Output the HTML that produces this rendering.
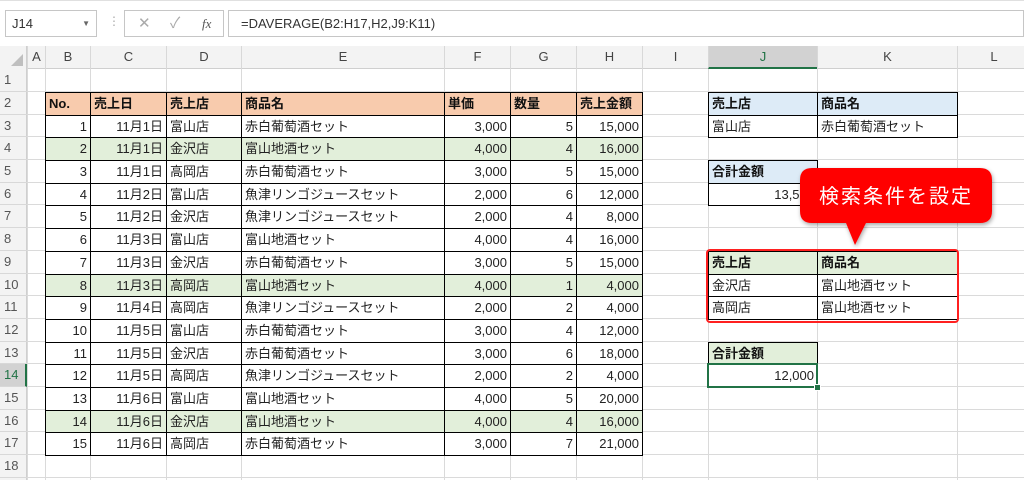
<!DOCTYPE html><html><head><meta charset="utf-8"><style>
html,body{margin:0;width:1024px;height:480px;overflow:hidden}
body{background:#fff;font-family:"Liberation Sans","Noto Sans CJK JP",sans-serif;position:relative;color:#222}
.c{position:absolute;box-sizing:border-box;font-size:13px;line-height:22px;white-space:nowrap;overflow:visible;padding:0 3px}
.tb{position:absolute;left:0;top:0;width:1024px;height:46px;background:#fff;border-top:1px solid #e0e0e0;box-sizing:border-box}
.box{position:absolute;border:1px solid #c6c6c6;background:#fff;box-sizing:border-box}
</style></head><body>
<div class="tb"></div>
<div class="box" style="left:5px;top:10px;width:92px;height:27px;font-size:13px;line-height:25px;padding-left:6px;color:#333">J14<span style="position:absolute;right:6px;top:0;font-size:8px;color:#666">▼</span></div>
<div style="position:absolute;left:108px;top:14px;color:#aaa;font-size:12px">⋮</div>
<div class="box" style="left:124px;top:10px;width:100px;height:27px;color:#aaa;font-size:15px;line-height:25px"><span style="position:absolute;left:13px">✕</span><span style="position:absolute;left:45px">✓</span><span style="position:absolute;left:77px;font-family:'Liberation Serif',serif;font-style:italic;color:#555;font-size:13px">fx</span></div>
<div class="box" style="left:228px;top:10px;width:796px;height:27px;font-size:13px;line-height:25px;padding-left:12px;color:#333">=DAVERAGE(B2:H17,H2,J9:K11)</div>
<div id="g" style="position:absolute;left:0;top:0;width:1024px;height:480px;overflow:hidden"></div>
<svg style="position:absolute;left:0;top:0" width="1024" height="480"><defs><filter id="s" x="-10%" y="-10%" width="130%" height="140%"><feDropShadow dx="1" dy="2" stdDeviation="2" flood-opacity="0.35"/></filter></defs>
<path filter="url(#s)" d="M812,168 H980 Q992,168 992,180 V211 Q992,223 980,223 H866 L855,245 L846,223 H812 Q800,223 800,211 V180 Q800,168 812,168 Z" fill="#ff0000"/>
<text x="896" y="203" text-anchor="middle" fill="#fff" font-size="20" font-family="Liberation Sans,Noto Sans CJK JP,sans-serif" letter-spacing="2">検索条件を設定</text></svg>
<script>
(function(){
var cols=[0,27,45,90,166,241,444,510,576,642,708,817,957,1030];
var names=['','A','B','C','D','E','F','G','H','I','J','K','L'];
var RT=69.3,RH=22.69,H0=46;
var h='';
function rt(r){return RT+(r-1)*RH}
h+='<div style="position:absolute;left:0;top:'+H0+'px;width:1024px;height:'+(RT-H0)+'px;background:#f3f3f3;border-bottom:1px solid #cfcfcf;box-sizing:border-box"></div>';
h+='<div style="position:absolute;left:0;top:'+H0+'px;width:27px;height:434px;background:#f3f3f3;border-right:1px solid #cfcfcf;box-sizing:border-box"></div>';
h+='<div style="position:absolute;left:11px;top:54px;width:0;height:0;border-left:12px solid transparent;border-bottom:12px solid #bfbfbf"></div>';
for(var i=1;i<13;i++){var x=cols[i],w=cols[i+1]-x;var sel=i==10;
h+='<div class="c" style="left:'+x+'px;top:'+H0+'px;width:'+w+'px;height:'+(RT-H0)+'px;text-align:center;color:'+(sel?'#217346':'#444')+';background:'+(sel?'#d2d2d2':'transparent')+';border-left:1px solid #d8d8d8;'+(sel?'border-bottom:2px solid #217346;':'')+'">'+names[i]+'</div>';}
for(var i=1;i<13;i++)h+='<div style="position:absolute;left:'+cols[i]+'px;top:'+RT+'px;width:1px;height:420px;background:#dadada"></div>';
for(var r=1;r<=19;r++){var y=rt(r);var sel=r==14;
h+='<div style="position:absolute;left:27px;top:'+(y+RH-1)+'px;width:1000px;height:1px;background:#dadada"></div>';
h+='<div class="c" style="left:0;top:'+y+'px;width:27px;height:'+RH+'px;padding-left:4px;color:'+(sel?'#217346':'#555')+';background:'+(sel?'#d2d2d2':'transparent')+';border-bottom:1px solid #d8d8d8;'+(sel?'border-right:2px solid #217346;':'')+'">'+r+'</div>';}
function cell(c,r,t,o){o=o||{};var x=cols[c],w=cols[c+1]-x,y=rt(r);
h+='<div class="c" style="left:'+x+'px;top:'+y+'px;width:'+(w+1)+'px;height:'+(RH+1)+'px;line-height:'+RH+'px;border:1px solid #000;background:'+(o.bg||'#fff')+';text-align:'+(o.r?'right':'left')+';'+(o.bold?'font-weight:bold;color:#111;':'')+'">'+t+'</div>';}
var hd=['No.','売上日','売上店','商品名','単価','数量','売上金額'];
for(var i=0;i<7;i++)cell(i+2,2,hd[i],{bg:'#f8cbad',bold:1});
var d=[[1,1,'富山店','赤白葡萄酒セット','3,000',5,'15,000'],[2,1,'金沢店','富山地酒セット','4,000',4,'16,000'],[3,1,'高岡店','赤白葡萄酒セット','3,000',5,'15,000'],[4,2,'富山店','魚津リンゴジュースセット','2,000',6,'12,000'],[5,2,'金沢店','魚津リンゴジュースセット','2,000',4,'8,000'],[6,3,'富山店','富山地酒セット','4,000',4,'16,000'],[7,3,'金沢店','赤白葡萄酒セット','3,000',5,'15,000'],[8,3,'高岡店','富山地酒セット','4,000',1,'4,000'],[9,4,'高岡店','魚津リンゴジュースセット','2,000',2,'4,000'],[10,5,'富山店','赤白葡萄酒セット','3,000',4,'12,000'],[11,5,'金沢店','赤白葡萄酒セット','3,000',6,'18,000'],[12,5,'高岡店','魚津リンゴジュースセット','2,000',2,'4,000'],[13,6,'富山店','富山地酒セット','4,000',5,'20,000'],[14,6,'金沢店','富山地酒セット','4,000',4,'16,000'],[15,6,'高岡店','赤白葡萄酒セット','3,000',7,'21,000']];
d.forEach(function(a,k){var r=k+3;var bg=(a[0]==2||a[0]==8||a[0]==14)?'#e2efda':'#fff';
cell(2,r,a[0],{r:1,bg:bg});cell(3,r,'11月'+a[1]+'日',{r:1,bg:bg});cell(4,r,a[2],{bg:bg});cell(5,r,a[3],{bg:bg});cell(6,r,a[4],{r:1,bg:bg});cell(7,r,a[5],{r:1,bg:bg});cell(8,r,a[6],{r:1,bg:bg});});
cell(10,2,'売上店',{bg:'#ddebf7',bold:1});cell(11,2,'商品名',{bg:'#ddebf7',bold:1});
cell(10,3,'富山店');cell(11,3,'赤白葡萄酒セット');
cell(10,5,'合計金額',{bg:'#ddebf7',bold:1});cell(10,6,'13,500',{r:1});
cell(10,9,'売上店',{bg:'#e2efda',bold:1});cell(11,9,'商品名',{bg:'#e2efda',bold:1});
cell(10,10,'金沢店');cell(11,10,'富山地酒セット');cell(10,11,'高岡店');cell(11,11,'富山地酒セット');
cell(10,13,'合計金額',{bg:'#e2efda',bold:1});cell(10,14,'12,000',{r:1});
var y14=rt(14);
h+='<div style="position:absolute;left:707px;top:'+(y14-1)+'px;width:111px;height:'+(RH+2)+'px;border:2px solid #217346;box-sizing:border-box"></div>';
h+='<div style="position:absolute;left:814px;top:'+(y14+RH-3)+'px;width:5px;height:5px;background:#217346;border:1px solid #fff"></div>';
h+='<div style="position:absolute;left:706px;top:249px;width:253px;height:74px;border:2px solid #ff2020;border-radius:4px;box-sizing:border-box"></div>';
document.getElementById('g').innerHTML=h;
})();
</script>
</body></html>
